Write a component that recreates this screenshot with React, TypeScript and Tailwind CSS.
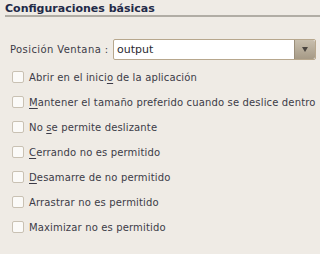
import React from "react";

const items: { pre: string; u?: string; post: string }[] = [
  { pre: "Abrir en el inici", u: "o", post: " de la aplicación" },
  { pre: "", u: "M", post: "antener el tamaño preferido cuando se deslice dentro" },
  { pre: "No ", u: "s", post: "e permite deslizante" },
  { pre: "", u: "C", post: "errando no es permitido" },
  { pre: "", u: "D", post: "esamarre de no permitido" },
  { pre: "Arrastrar no es permitido", post: "" },
  { pre: "Maximizar no es permitido", post: "" },
];

export default function App() {
  return (
    <div
      className="w-[320px] h-[254px] bg-[#efebe5] overflow-hidden text-[10px] text-[#3c3b47]"
      style={{ fontFamily: '"DejaVu Sans", sans-serif' }}
    >
      <div className="pl-[5px] pt-[3px]">
        <div className="font-bold text-[#1f2a48] text-[11px] leading-[12px]">Configuraciones básicas</div>
        <div className="h-[2px] bg-[#b1ada5]" />
      </div>
      <div className="flex items-center pl-[10px] mt-[22px] h-[21px]">
        <span className="w-[103px] tracking-[0.4px]">Posición Ventana :</span>
        <div className="flex h-[21px] w-[203px] border border-[#b7a78d] rounded-[2px] bg-white">
          <div className="flex-1 pl-[3px] leading-[19px] text-[11px] text-[#2a2a30]">output</div>
          <div className="w-[21px] h-[19px] rounded-r-[2px] bg-gradient-to-b from-[#c8bfae] to-[#a69a86] flex items-center justify-center border-l border-[#9a8e7a]">
            <div className="w-0 h-0 border-l-[3px] border-r-[3px] border-t-[5px] border-l-transparent border-r-transparent border-t-[#4a4540]" />
          </div>
        </div>
      </div>
      <div className="flex flex-col pl-[12px] mt-[10px] gap-[11px]">
        {items.map((it, i) => (
          <div key={i} className="flex items-center h-[14px] whitespace-nowrap">
            <div className="w-[12px] h-[12px] border border-[#c9c1b3] rounded-[2px] bg-[#fbfaf8] shrink-0" />
            <span className="ml-[5px] tracking-[0.15px]">
              {it.pre}
              {it.u && <span className="underline underline-offset-2">{it.u}</span>}
              {it.post}
            </span>
          </div>
        ))}
      </div>
    </div>
  );
}
